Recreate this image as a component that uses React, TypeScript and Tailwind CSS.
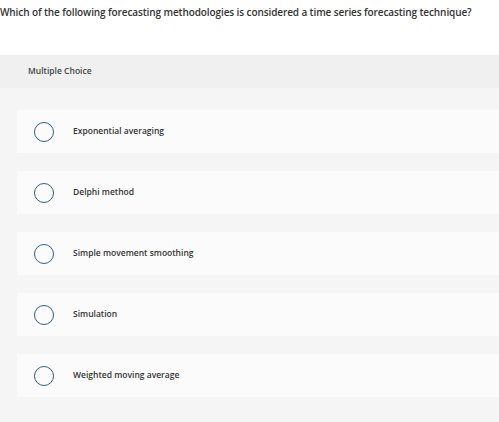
import React from "react";

const options = [
  "Exponential averaging",
  "Delphi method",
  "Simple movement smoothing",
  "Simulation",
  "Weighted moving average",
];

export default function App() {
  return (
    <div className="w-[499px] h-[422px] bg-white flex flex-col text-[#333]" style={{ fontFamily: '"Open Sans", Arial, sans-serif' }}>
      <div className="h-[55px] pt-[5px] text-[10px] leading-[14px] font-semibold tracking-[-0.1px] whitespace-nowrap">
        Which of the following forecasting methodologies is considered a time series forecasting technique?
      </div>
      <div className="h-[33px] bg-[#f0f0f0] flex items-center pl-[28px] text-[8.5px] font-semibold text-[#444]">
        Multiple Choice
      </div>
      <div className="flex-1 bg-[#f5f5f5] pl-[17px] pt-[22px] flex flex-col gap-[18px]">
        {options.map((o) => (
          <div key={o} className="h-[43px] bg-[#fbfbfb] flex items-center pl-[17px]">
            <div className="w-[20px] h-[20px] rounded-full border-[1.5px] border-[#2f5f8f] shrink-0" />
            <div className="ml-[19px] text-[8.5px] font-semibold text-[#333]">{o}</div>
          </div>
        ))}
      </div>
    </div>
  );
}
